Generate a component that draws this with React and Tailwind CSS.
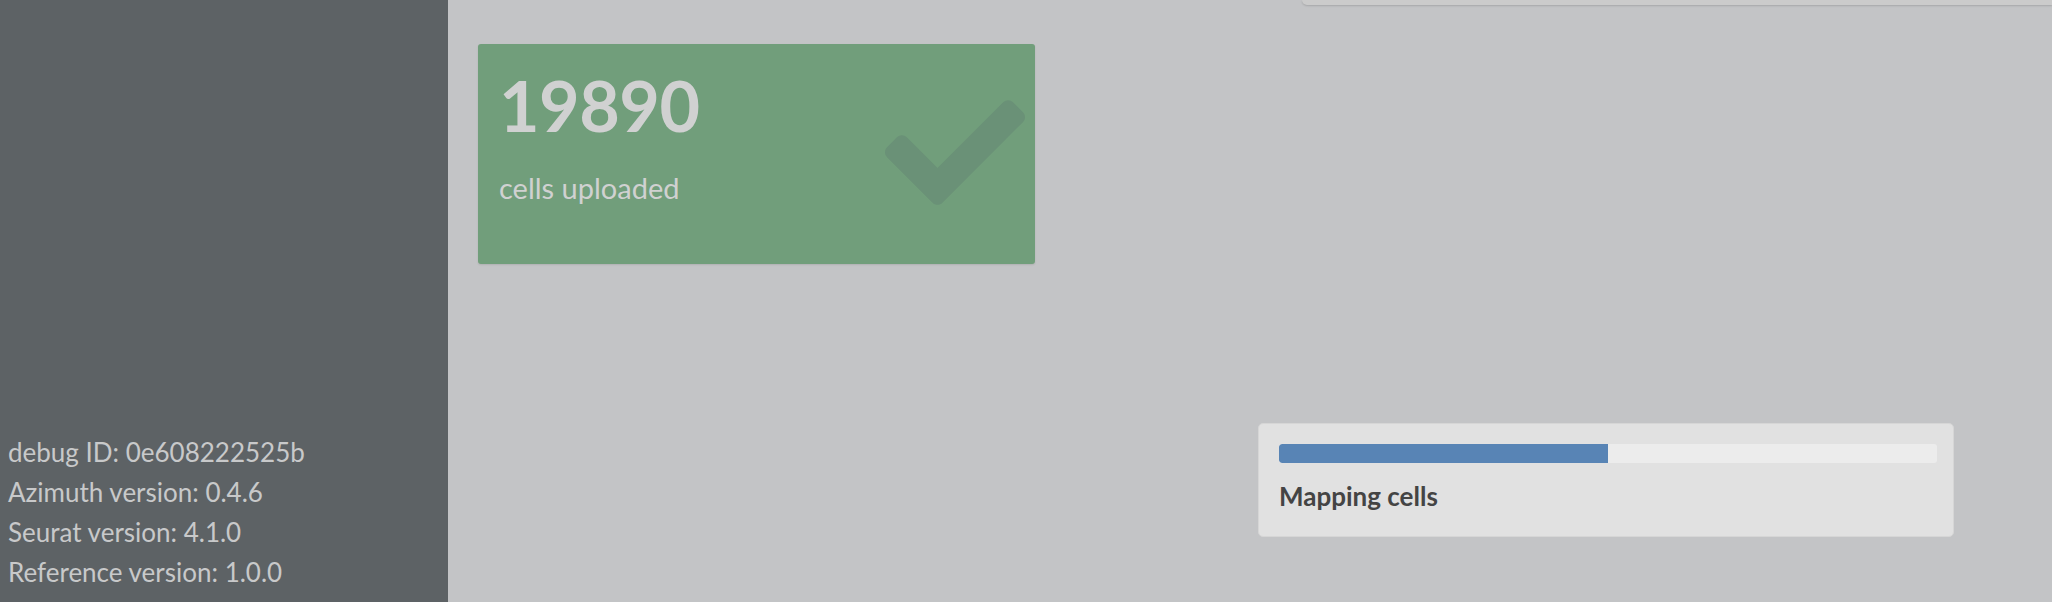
import React from 'react';

const font = { fontFamily: 'Lato, "Liberation Sans", sans-serif' };

function CheckIcon({ className }) {
  return (
    <svg viewBox="0 65 512 382" className={className} fill="currentColor">
      <path d="M173.898 439.404l-166.4-166.4c-9.997-9.997-9.997-26.206 0-36.204l36.203-36.204c9.997-9.998 26.207-9.998 36.204 0L192 312.69 432.095 72.596c9.997-9.997 26.207-9.997 36.204 0l36.203 36.204c9.997 9.997 9.997 26.206 0 36.204l-294.4 294.401c-9.998 9.997-26.207 9.997-36.204-.001z" />
    </svg>
  );
}

const versions = [
  'debug ID: 0e608222525b',
  'Azimuth version: 0.4.6',
  'Seurat version: 4.1.0',
  'Reference version: 1.0.0',
];

export default function App() {
  return (
    <div className="flex h-[602px] w-full overflow-hidden bg-[#c3c4c6]" style={font}>
      {/* Sidebar */}
      <aside className="flex w-[448px] shrink-0 flex-col justify-end bg-[#5d6265] pb-[10px] pl-[8px]">
        {versions.map((v) => (
          <div key={v} className="text-[26px] leading-[40px] text-[#c8c9ca]">{v}</div>
        ))}
      </aside>

      {/* Main */}
      <main className="flex flex-1 flex-col">
        <div className="flex justify-end">
          <div className="h-[5px] w-[750px] rounded-bl-[5px] bg-[#cbcbcb] shadow-[0_1px_2px_rgba(0,0,0,0.15)]" />
        </div>

        <div className="pl-[30px] pt-[39px]">
          <div className="relative h-[220px] w-[557px] overflow-hidden rounded-[3px] bg-[#719e7b] pl-[21px] pt-[23px] shadow-[0_1px_2px_rgba(0,0,0,0.1)]">
            <CheckIcon className="absolute right-[10px] top-[56px] h-[105px] w-[140px] text-[#6a9177]" />
            <div className="relative">
              <h3 className="text-[70px] font-bold leading-[1.1] tracking-[-0.5px] text-[#d0d1d1]">19890</h3>
              <p className="mt-[24px] text-[29px] leading-[1.4] text-[#d0d1d1]">cells uploaded</p>
            </div>
          </div>
        </div>

        {/* Progress notification */}
        <div className="mt-auto mb-[65px] mr-[98px] self-end">
          <div className="w-[696px] rounded-[5px] border border-[#d6d6d6] bg-[#e1e1e1] pb-[22px] pl-[20px] pr-[16px] pt-[20px]">
            <div className="h-[19px] w-full overflow-hidden rounded-[3px] bg-[#ececec]">
              <div className="h-full w-1/2 rounded-l-[3px] bg-[#5884b5]" />
            </div>
            <div className="mt-[15px] text-[26px] font-bold leading-[36px] text-[#444444]">Mapping cells</div>
          </div>
        </div>
      </main>
    </div>
  );
}
